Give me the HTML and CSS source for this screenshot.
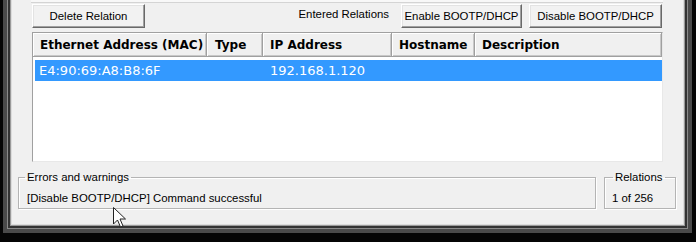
FILE: index.html
```html
<!DOCTYPE html>
<html>
<head>
<meta charset="utf-8">
<link rel="stylesheet" href="styles.css">
</head>
<body>
<div class="client">
  <div class="prev"></div>
  <div class="toolbar">
    <button class="btn btn-delete">Delete Relation</button>
    <span class="entered">Entered Relations</span>
    <button class="btn btn-enable">Enable BOOTP/DHCP</button>
    <button class="btn btn-disable">Disable BOOTP/DHCP</button>
  </div>
  <div class="list">
    <div class="list-header">
      <div class="hcell c-mac">Ethernet Address (MAC)</div>
      <div class="hcell c-type">Type</div>
      <div class="hcell c-ip">IP Address</div>
      <div class="hcell c-host">Hostname</div>
      <div class="hcell c-desc">Description</div>
    </div>
    <div class="row selected">
      <div class="cell r-mac">E4:90:69:A8:B8:6F</div>
      <div class="cell r-type"></div>
      <div class="cell r-ip">192.168.1.120</div>
      <div class="cell r-host"></div>
      <div class="cell r-desc"></div>
    </div>
  </div>
  <div class="status">
    <fieldset class="group group-errors">
      <legend>Errors and warnings</legend>
      <div class="group-text">[Disable BOOTP/DHCP] Command successful</div>
    </fieldset>
    <fieldset class="group group-relations">
      <legend>Relations</legend>
      <div class="group-text">1 of 256</div>
    </fieldset>
  </div>
  <svg class="cursor" width="14" height="22" viewBox="0 0 14 22">
    <path d="M0.5 0.5 L0.5 17 L4.5 13 L7.5 20 L10 19 L7 12 L12.5 12 Z" fill="#fff" stroke="#222" stroke-width="1" stroke-linejoin="round"/>
  </svg>
</div>
</body>
</html>
```
FILE: styles.css
```css
html, body {
  margin: 0;
  padding: 0;
  background: #050505;
  width: 696px;
  height: 242px;
  overflow: hidden;
}

.client {
  position: relative;
  margin-left: 12px;
  width: 671px;
  height: 224px;
  background: #f0f0f0;
  box-shadow: 0 0 0 1px #dcdcdc, 0 0 0 2px #9a9a9a, 0 0 0 4px #333, 0 0 0 5px #8a8a8a, 0 0 0 9px #4a4a4a;
  font-family: "Liberation Sans", Arial, sans-serif;
  font-size: 11.4px;
  color: #000;
}

.prev {
  margin-left: 19px;
  width: 632px;
  height: 2px;
  background: #f8f8f8;
  border-bottom: 1px solid #d4d4d4;
}

.toolbar {
  display: flex;
  align-items: center;
  margin-top: 1px;
  padding-left: 20px;
  padding-right: 21px;
  height: 24px;
}

.btn {
  height: 24px;
  margin: 0;
  padding: 0;
  background: #f2f2f2;
  border: 1px solid;
  border-color: #fff #696969 #696969 #fff;
  box-shadow: inset -1px -1px 0 #a0a0a0, inset 1px 1px 0 #e3e3e3;
  font-family: "Liberation Sans", Arial, sans-serif;
  font-size: 11.4px;
  color: #000;
}

.btn-delete { width: 113px; }
.btn-enable { width: 121px; }
.btn-disable { width: 133px; margin-left: 7px; }

.entered {
  margin-left: auto;
  margin-right: 12px;
  position: relative;
  top: -2px;
}

.list {
  margin-top: 4px;
  margin-left: 20px;
  width: 629px;
  height: 128px;
  border: 1px solid;
  border-color: #a0a0a0 #e8e8e8 #e8e8e8 #a0a0a0;
  background: #fff;
}

.list-header {
  display: flex;
  height: 24px;
  background: #f0f0f0;
}

.hcell {
  box-sizing: border-box;
  height: 24px;
  line-height: 24px;
  padding-left: 7px;
  border-right: 1px solid #a0a0a0;
  border-bottom: 1px solid #a0a0a0;
  box-shadow: inset 1px 1px 0 #fff, inset -1px -1px 0 #c8c8c8;
  font-family: "DejaVu Sans", Verdana, sans-serif;
  font-weight: bold;
  font-size: 12px;
  white-space: nowrap;
}

.c-mac { width: 174px; }
.c-type { width: 56px; padding-left: 8px; }
.c-ip { width: 129px; }
.c-host { width: 83px; }
.c-desc { flex: 1; }

.row {
  display: flex;
  margin-top: 3px;
  margin-left: 2px;
  height: 21px;
  line-height: 21px;
  font-family: "DejaVu Sans", Verdana, sans-serif;
  font-size: 13px;
  white-space: nowrap;
}

.row.selected {
  background: #3399ff;
  color: #fff;
}

.cell { box-sizing: border-box; }
.r-mac { width: 172px; padding-left: 4px; }
.r-type { width: 56px; }
.r-ip { width: 129px; padding-left: 7px; }
.r-host { width: 83px; }
.r-desc { flex: 1; }

.status {
  display: flex;
  margin-top: 9px;
  margin-left: 6px;
}

.group {
  box-sizing: border-box;
  margin: 0;
  padding: 7px 0 3px 6px;
  border: 1px solid #b4b4b4;
  box-shadow: 1px 1px 0 #fff, inset 1px 1px 0 #fff;
  min-width: 0;
}

.group legend {
  padding: 0 2px;
  line-height: 13px;
  font-size: 11.4px;
}

.group-text {
  line-height: 14px;
  padding-left: 2px;
}

.group-errors { width: 578px; }
.group-relations { width: 72px; margin-left: 8px; }
.group-relations legend { margin-left: 2px; }
.group-relations .group-text { padding-left: 1px; }

.cursor {
  position: absolute;
  left: 101px;
  top: 207px;
}
```
